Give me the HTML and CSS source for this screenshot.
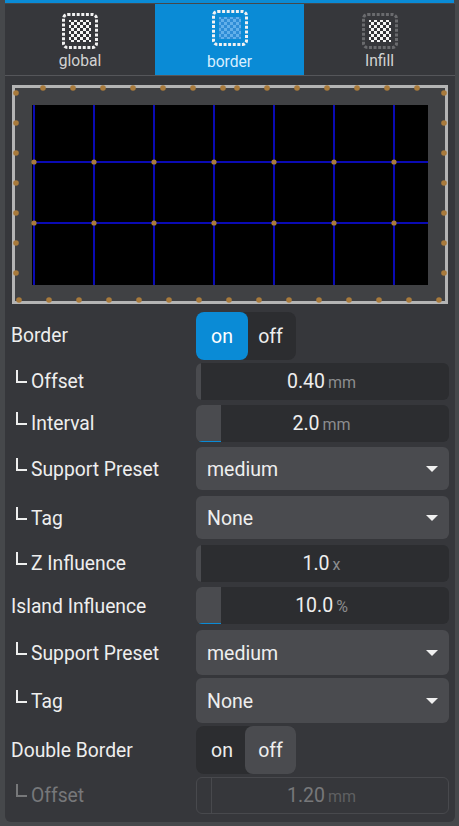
FILE: index.html
```
<!DOCTYPE html>
<html lang="en">
<head>
<meta charset="utf-8">
<title>Border settings</title>
<link rel="stylesheet" href="styles.css">
</head>
<body>
<svg class="defs" width="0" height="0" aria-hidden="true">
  <defs>
    <pattern id="chk" width="6" height="6" patternUnits="userSpaceOnUse">
      <rect width="6" height="6" fill="#333438"/>
      <rect width="3" height="3" fill="#f4f4f4"/>
      <rect x="3" y="3" width="3" height="3" fill="#f4f4f4"/>
    </pattern>
    <pattern id="chkblue" width="6" height="6" patternUnits="userSpaceOnUse">
      <rect width="6" height="6" fill="#2f8dd6"/>
      <rect width="3" height="3" fill="#62b0ea"/>
      <rect x="3" y="3" width="3" height="3" fill="#62b0ea"/>
    </pattern>
  </defs>
</svg>
<div class="topbar"></div>
<main class="panel">
  <nav class="tabs">
    <div class="tab">
      <svg class="tab-icon" viewBox="0 0 36 36"><rect x="1.5" y="1.5" width="33" height="33" rx="4" class="dots"/><rect x="7" y="7" width="22" height="22" fill="url(#chk)"/></svg>
      <span>global</span>
    </div>
    <div class="tab active">
      <svg class="tab-icon" viewBox="0 0 36 36"><rect x="1.5" y="1.5" width="33" height="33" rx="4" class="dots"/><rect x="7" y="7" width="22" height="22" fill="url(#chkblue)"/></svg>
      <span>border</span>
    </div>
    <div class="tab">
      <svg class="tab-icon" viewBox="0 0 36 36"><rect x="1.5" y="1.5" width="33" height="33" rx="4" class="dots dim"/><rect x="7" y="7" width="22" height="22" fill="url(#chk)"/></svg>
      <span>Infill</span>
    </div>
  </nav>
  <svg class="preview" viewBox="0 0 436 219" id="preview">
    <rect x="1.5" y="1.5" width="433" height="216" fill="#404144" stroke="#b4b4b4" stroke-width="3"/>
    <rect x="20" y="20" width="396" height="180" fill="#000"/>
    <g stroke="#0a0ab4" stroke-width="2">
      <path d="M22 20V200M82 20V200M142 20V200M202 20V200M262 20V200M322 20V200M382 20V200"/>
      <path d="M20 77H416M20 138H416"/>
    </g>
    <g fill="#a87a3c">
      <circle cx="31" cy="3" r="2.8"/><circle cx="61" cy="3" r="2.8"/><circle cx="91" cy="3" r="2.8"/><circle cx="121" cy="3" r="2.8"/><circle cx="151" cy="3" r="2.8"/><circle cx="181" cy="3" r="2.8"/><circle cx="211" cy="3" r="2.8"/><circle cx="225" cy="3" r="2.8"/><circle cx="255" cy="3" r="2.8"/><circle cx="285" cy="3" r="2.8"/><circle cx="315" cy="3" r="2.8"/><circle cx="345" cy="3" r="2.8"/><circle cx="375" cy="3" r="2.8"/><circle cx="405" cy="3" r="2.8"/>
      <circle cx="7" cy="215" r="2.8"/><circle cx="37" cy="215" r="2.8"/><circle cx="67" cy="215" r="2.8"/><circle cx="97" cy="215" r="2.8"/><circle cx="127" cy="215" r="2.8"/><circle cx="157" cy="215" r="2.8"/><circle cx="187" cy="215" r="2.8"/><circle cx="217" cy="215" r="2.8"/><circle cx="247" cy="215" r="2.8"/><circle cx="277" cy="215" r="2.8"/><circle cx="307" cy="215" r="2.8"/><circle cx="337" cy="215" r="2.8"/><circle cx="367" cy="215" r="2.8"/><circle cx="397" cy="215" r="2.8"/><circle cx="427" cy="215" r="2.8"/>
      <circle cx="4" cy="8" r="2.8"/><circle cx="4" cy="38" r="2.8"/><circle cx="4" cy="68" r="2.8"/><circle cx="4" cy="98" r="2.8"/><circle cx="4" cy="128" r="2.8"/><circle cx="4" cy="158" r="2.8"/><circle cx="4" cy="188" r="2.8"/>
      <circle cx="432" cy="8" r="2.8"/><circle cx="432" cy="38" r="2.8"/><circle cx="432" cy="68" r="2.8"/><circle cx="432" cy="98" r="2.8"/><circle cx="432" cy="128" r="2.8"/><circle cx="432" cy="158" r="2.8"/><circle cx="432" cy="188" r="2.8"/>
      <circle cx="22" cy="77" r="2.6"/><circle cx="82" cy="77" r="2.6"/><circle cx="142" cy="77" r="2.6"/><circle cx="202" cy="77" r="2.6"/><circle cx="262" cy="77" r="2.6"/><circle cx="322" cy="77" r="2.6"/><circle cx="382" cy="77" r="2.6"/>
      <circle cx="22" cy="138" r="2.6"/><circle cx="82" cy="138" r="2.6"/><circle cx="142" cy="138" r="2.6"/><circle cx="202" cy="138" r="2.6"/><circle cx="262" cy="138" r="2.6"/><circle cx="322" cy="138" r="2.6"/><circle cx="382" cy="138" r="2.6"/>
    </g>
  </svg>
  <section class="rows">
    <div class="row h-toggle"><label class="lbl">Border</label>
      <div class="toggle"><span class="opt on-blue">on</span><span class="opt off-plain">off</span></div></div>
    <div class="row h-slider gap1"><label class="lbl sub">Offset</label>
      <div class="slider"><i class="fill" style="width:5px"></i><span class="val">0.40<small>mm</small></span></div></div>
    <div class="row h-slider gap2"><label class="lbl sub">Interval</label>
      <div class="slider"><i class="fill mark" style="width:25px"></i><span class="val">2.0<small>mm</small></span></div></div>
    <div class="row h-sel1 gap2"><label class="lbl sub">Support Preset</label>
      <div class="select"><span>medium</span><b class="caret"></b></div></div>
    <div class="row h-sel2 gap3"><label class="lbl sub">Tag</label>
      <div class="select"><span>None</span><b class="caret"></b></div></div>
    <div class="row h-slider gap3"><label class="lbl sub">Z Influence</label>
      <div class="slider"><i class="fill" style="width:5px"></i><span class="val">1.0<small>x</small></span></div></div>
    <div class="row h-slider gap2 low"><label class="lbl">Island Influence</label>
      <div class="slider"><i class="fill mark" style="width:25px"></i><span class="val">10.0<small>%</small></span></div></div>
    <div class="row h-sel3 gap3"><label class="lbl sub">Support Preset</label>
      <div class="select"><span>medium</span><b class="caret"></b></div></div>
    <div class="row h-sel3 gap1"><label class="lbl sub">Tag</label>
      <div class="select"><span>None</span><b class="caret"></b></div></div>
    <div class="row h-toggle gap1 low"><label class="lbl">Double Border</label>
      <div class="toggle"><span class="opt off-plain">on</span><span class="opt on-grey">off</span></div></div>
    <div class="row h-slider gap1 disabled"><label class="lbl sub">Offset</label>
      <div class="slider"><i class="fill line" style="width:15px"></i><span class="val">1.20<small>mm</small></span></div></div>
  </section>
</main>
</body>
</html>
```

FILE: styles.css
```
* { box-sizing: border-box; }
html, body { margin: 0; padding: 0; }
body {
  width: 459px;
  height: 826px;
  overflow: hidden;
  background: #46484b;
  font-family: Roboto, "Liberation Sans", sans-serif;
  color: #eeeeee;
}
.defs { position: absolute; }
.topbar { height: 3px; margin: 0 5px; background: #0a8bd6; }
.panel {
  margin: 1px 4px 0 5px;
  height: 818px;
  background: #36373b;
  border-radius: 0 0 6px 6px;
  padding-bottom: 7px;
}
.tabs {
  display: flex;
  height: 72px;
  border-bottom: 1px solid #55565a;
}
.tab {
  width: 150px;
  display: flex;
  flex-direction: column;
  align-items: center;
  padding-top: 9px;
  font-size: 15.6px;
  line-height: 18px;
  color: #d2d2d2;
}
.tab span { margin-top: 3px; }
.tab.active { width: 149px; background: #0a8bd6; color: #d9efff; padding-top: 6px; }
.tab.active span { margin-top: 7px; }
.tab:last-child { width: 151px; }
.tab-icon { width: 36px; height: 36px; display: block; }
.dots {
  fill: none;
  stroke: #f2f2f2;
  stroke-width: 3;
  stroke-dasharray: 3 1.6;
}
.dots.dim { stroke: #6a6b6e; }
.preview { display: block; width: 436px; height: 219px; margin: 9px 0 0 7px; }
.rows { margin-top: 8px; padding: 0 6px; }
.row { display: flex; align-items: center; }
.h-toggle { height: 48px; }
.h-slider { height: 37px; }
.h-sel1 { height: 43px; }
.h-sel2 { height: 43px; }
.h-sel3 { height: 45px; }
.gap1 { margin-top: 3px; }
.gap2 { margin-top: 5px; }
.gap3 { margin-top: 6px; }
.lbl {
  width: 185px;
  flex: none;
  font-size: 19.3px;
  line-height: 22px;
  color: #eeeeee;
}
.sub { padding-left: 5px; }
.sub::before {
  content: "";
  display: inline-block;
  width: 9px;
  height: 11px;
  margin-right: 4px;
  border-left: 2px solid #eeeeee;
  border-bottom: 2px solid #eeeeee;
  vertical-align: 5px;
}
.h-sel1 .lbl, .h-sel2 .lbl, .h-sel3 .lbl, .low .lbl { padding-top: 2px; }
.select span { padding-top: 2px; }
.toggle {
  display: flex;
  width: 100px;
  height: 100%;
  background: #2c2d30;
  border-radius: 8px;
  font-size: 19.5px;
}
.opt {
  display: flex;
  align-items: center;
  justify-content: center;
  border-radius: 8px;
}
.opt:first-child { width: 52px; }
.opt:last-child { flex: 1; }
.on-blue { background: #0a8bd6; color: #fff; }
.on-grey { background: #4a4b4f; margin-left: -3px; }
.off-plain { color: #eeeeee; }
.off-plain:last-child { padding-right: 3px; }
.slider {
  position: relative;
  width: 253px;
  height: 100%;
  background: #2c2d30;
  border-radius: 6px;
  overflow: hidden;
  display: flex;
  align-items: center;
  justify-content: center;
}
.fill {
  position: absolute;
  left: 0;
  top: 0;
  bottom: 0;
  background: #4a4b4f;
}
.fill.mark { border-bottom: 1px solid #0a8bd6; }
.val {
  position: relative;
  left: -1px;
  font-size: 19.5px;
  color: #eeeeee;
}
.val small { font-size: 16px; color: #8b8c8e; margin-left: 3px; }
.select {
  width: 253px;
  height: 100%;
  background: #4a4b4f;
  border-radius: 6px;
  display: flex;
  align-items: center;
  justify-content: space-between;
  padding: 0 11px 0 11px;
  font-size: 19.5px;
  color: #eeeeee;
}
.caret {
  width: 0;
  height: 0;
  border-left: 6px solid transparent;
  border-right: 6px solid transparent;
  border-top: 6px solid #f0f0f0;
}
.disabled .lbl { color: #77787a; }
.disabled .sub::before { border-color: #77787a; }
.disabled .slider { background: transparent; border: 1px solid #48494d; }
.disabled .fill { background: transparent; border-right: 1px solid #48494d; }
.disabled .val { color: #77787a; }
.disabled .val small { color: #5f6062; }
```
